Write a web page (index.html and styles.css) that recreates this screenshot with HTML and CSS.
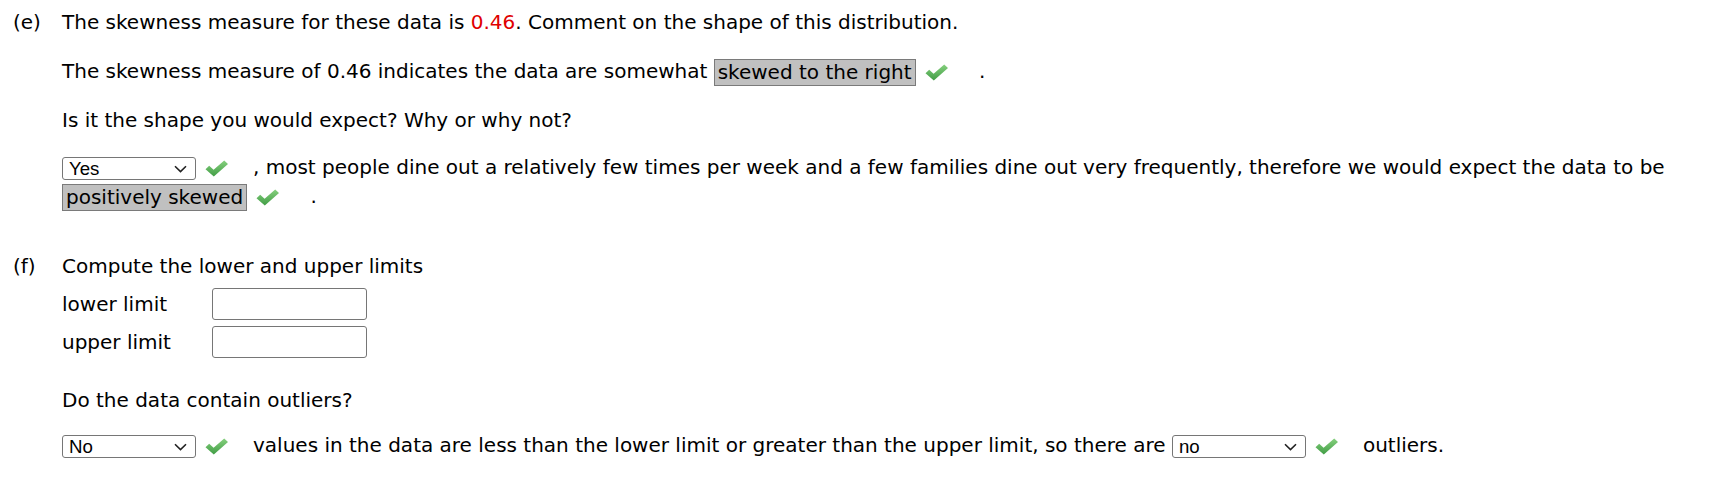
FILE: index.html
```html
<!DOCTYPE html>
<html>
<head>
<meta charset="utf-8">
<link rel="stylesheet" href="styles.css">
</head>
<body>
<svg width="0" height="0" class="defs">
  <defs>
    <linearGradient id="g" x1="0" y1="0" x2="0" y2="1">
      <stop offset="0" stop-color="#86d07e"/>
      <stop offset="1" stop-color="#419d45"/>
    </linearGradient>
    <symbol id="chk" viewBox="0 0 24 17">
      <path d="M0.5 9.2 L4.2 5.8 L8.6 9.8 L19.2 0.5 L23 4 L8.8 16.5 Z" fill="url(#g)"/>
    </symbol>
  </defs>
</svg>
<div class="page">
  <section class="part part-e">
    <div class="label">(e)</div>
    <div class="body">
      <p class="line l1">The skewness measure for these data is <span class="red">0.46</span>. Comment on the shape of this distribution.</p>
      <p class="line l2">The skewness measure of 0.46 indicates the data are somewhat <span class="answer">skewed to the right</span><svg class="chk"><use href="#chk"/></svg> .</p>
      <p class="line l3">Is it the shape you would expect? Why or why not?</p>
      <p class="line l4"><span class="select sel-yn"><span class="sel-text">Yes</span><svg class="chev" viewBox="0 0 13 8"><path d="M1 1.2 L6.5 6.6 L12 1.2" fill="none" stroke="#222" stroke-width="1.6"/></svg></span><svg class="chk"><use href="#chk"/></svg>, most people dine out a relatively few times per week and a few families dine out very frequently, therefore we would expect the data to be <span class="answer">positively skewed</span><svg class="chk"><use href="#chk"/></svg> .</p>
    </div>
  </section>
  <section class="part part-f">
    <div class="label">(f)</div>
    <div class="body">
      <p class="line f1">Compute the lower and upper limits</p>
      <div class="limits">
        <div class="lim-row"><span class="lim-label">lower limit</span><span class="input"></span></div>
        <div class="lim-row"><span class="lim-label">upper limit</span><span class="input"></span></div>
      </div>
      <p class="line f2">Do the data contain outliers?</p>
      <p class="line f3"><span class="select sel-yn"><span class="sel-text">No</span><svg class="chev" viewBox="0 0 13 8"><path d="M1 1.2 L6.5 6.6 L12 1.2" fill="none" stroke="#222" stroke-width="1.6"/></svg></span><svg class="chk"><use href="#chk"/></svg>values in the data are less than the lower limit or greater than the upper limit, so there are <span class="select sel-no"><span class="sel-text">no</span><svg class="chev" viewBox="0 0 13 8"><path d="M1 1.2 L6.5 6.6 L12 1.2" fill="none" stroke="#222" stroke-width="1.6"/></svg></span><svg class="chk"><use href="#chk"/></svg>outliers.</p>
    </div>
  </section>
</div>
</body>
</html>
```
FILE: styles.css
```css
html, body {
  margin: 0;
  padding: 0;
  background: #ffffff;
}
body {
  font-family: "DejaVu Sans", Verdana, sans-serif;
  font-size: 20px;
  color: #000;
}
.defs {
  position: absolute;
  width: 0;
  height: 0;
}
.page {
  padding: 10px 0 0 13px;
}
.part {
  display: flex;
}
.label {
  width: 49px;
  flex: none;
  line-height: 24px;
}
.body {
  flex: 1;
}
.line {
  margin: 0;
  line-height: 24px;
}
.red {
  color: #e00000;
}
.l2 {
  margin-top: 25px;
}
.l3 {
  margin-top: 22px;
}
.l4 {
  margin-top: 21px;
  line-height: 29px;
}
.answer {
  display: inline-block;
  background: #c0c0c0;
  border: 1px solid #7a7a7a;
  padding: 0 3px;
  line-height: 25px;
  vertical-align: middle;
}
.chk {
  display: inline-block;
  width: 24px;
  height: 17px;
  margin: 0 24px 0 9px;
  vertical-align: middle;
}
.select {
  display: inline-flex;
  align-items: center;
  justify-content: space-between;
  box-sizing: border-box;
  width: 134px;
  height: 23px;
  border: 1px solid #767676;
  border-radius: 3px;
  background: #fff;
  padding: 0 8px 0 6px;
  font-family: "Liberation Sans", Arial, sans-serif;
  font-size: 18.67px;
  line-height: 21px;
  vertical-align: middle;
  color: #000;
}
.chev {
  width: 13px;
  height: 8px;
}
.part-f {
  margin-top: 43px;
}
.limits {
  margin-top: 10px;
}
.lim-row {
  display: flex;
  align-items: center;
  height: 32px;
  margin-bottom: 6px;
}
.lim-label {
  width: 150px;
}
.input {
  box-sizing: border-box;
  width: 155px;
  height: 32px;
  border: 1px solid #767676;
  border-radius: 3px;
  background: #fff;
}
.f2 {
  margin-top: 30px;
}
.f3 {
  margin-top: 19px;
  line-height: 29px;
}
```
